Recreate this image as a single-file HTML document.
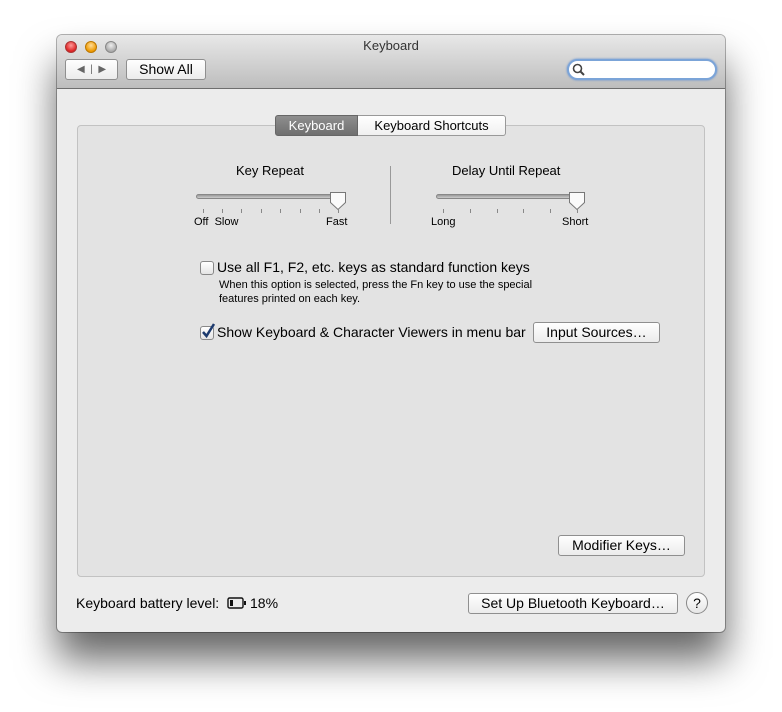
<!DOCTYPE html>
<html><head><meta charset="utf-8"><style>
*{box-sizing:border-box;margin:0;padding:0}
body{width:782px;height:712px;background:#fff;font-family:"Liberation Sans",sans-serif;font-size:14px;color:#000;position:relative;overflow:hidden}
.win{position:absolute;left:57px;top:35px;width:668px;height:597px;background:#ececec;border-radius:5px;box-shadow:0 28px 40px rgba(0,0,0,.6),0 0 0 1px rgba(0,0,0,.3);overflow:hidden}
.tb{position:absolute;left:0;top:0;width:668px;height:54px;background:linear-gradient(#e8e8e8,#bdbdbd);border-bottom:1px solid #6e6e6e}
.a{position:absolute}
.light{position:absolute;top:6px;width:12px;height:12px;border-radius:50%}
.btn{position:absolute;height:21px;border:1px solid #8f8f8f;border-radius:3px;background:linear-gradient(#fff,#ececec);text-align:center;line-height:19px;font-size:14px}
.t{position:absolute;white-space:nowrap}
.sm{font-size:11px}
.track{position:absolute;height:5px;border-radius:3px;background:linear-gradient(#999,#ccc);border:1px solid #888}
.tick{position:absolute;width:1px;height:4px;background:#888}
.cb{position:absolute;width:14px;height:14px;border:1px solid #888;border-radius:3px;background:linear-gradient(#fff,#e4e4e4)}
</style></head><body>
<div class="win">
 <div class="tb">
  <div class="light" style="left:8px;background:radial-gradient(circle at 50% 35%,#f99,#d22 70%);border:1px solid #a33"></div>
  <div class="light" style="left:28px;background:radial-gradient(circle at 50% 35%,#fd9,#e90 70%);border:1px solid #b70"></div>
  <div class="light" style="left:48px;background:radial-gradient(circle at 50% 35%,#eee,#aaa 70%);border:1px solid #888"></div>
  <div class="t" style="left:0;width:668px;text-align:center;top:3px;color:#333;font-size:13px">Keyboard</div>
  <div class="btn" style="left:8px;top:24px;width:53px;font-size:10px;color:#666">◀ &nbsp;|&nbsp; ▶</div>
  <div class="btn" style="left:69px;top:24px;width:80px">Show All</div>
  <div class="a" style="left:510px;top:24px;width:150px;height:21px;border-radius:11px;background:#fff;border:2px solid #7ba4d8;box-shadow:0 0 2px #5b8bd0"></div>
  <svg class="a" style="left:515px;top:28px" width="14" height="14"><circle cx="5.5" cy="5.5" r="4" fill="none" stroke="#444" stroke-width="1.6"/><path d="M8.5 8.5 12 12" stroke="#444" stroke-width="2"/></svg>
 </div>
 <div class="a" style="left:20px;top:90px;width:628px;height:452px;background:#e3e3e3;border:1px solid #c2c2c2;border-radius:4px"></div>
 <div class="a" style="left:218px;top:80px;width:83px;height:21px;background:linear-gradient(#8e8e8e,#6f6f6f);border:1px solid #666;border-radius:3px 0 0 3px;color:#fff;text-align:center;line-height:19px;font-size:13px">Keyboard</div>
 <div class="a" style="left:301px;top:80px;width:148px;height:21px;background:linear-gradient(#fff,#f0f0f0);border:1px solid #999;border-left:none;border-radius:0 3px 3px 0;text-align:center;line-height:19px;font-size:13px">Keyboard Shortcuts</div>

 <div class="t" style="left:179px;top:128px;font-size:13px">Key Repeat</div>
 <div class="track" style="left:139px;top:159px;width:146px"></div>
 <svg class="a" style="left:272px;top:156px" width="18" height="20"><path d="M1.5 1.5h15v10l-7.5 7-7.5-7z" fill="#fafafa" stroke="#777"/></svg>
 <div class="tick" style="left:146px;top:174px"></div><div class="tick" style="left:165px;top:174px"></div><div class="tick" style="left:184px;top:174px"></div><div class="tick" style="left:204px;top:174px"></div><div class="tick" style="left:223px;top:174px"></div><div class="tick" style="left:243px;top:174px"></div><div class="tick" style="left:262px;top:174px"></div><div class="tick" style="left:281px;top:174px"></div>
 <div class="t sm" style="left:137px;top:181px">Off&nbsp; Slow</div>
 <div class="t sm" style="left:269px;top:181px">Fast</div>
 <div class="a" style="left:333px;top:131px;width:1px;height:58px;background:#999"></div>
 <div class="t" style="left:395px;top:128px;font-size:13px">Delay Until Repeat</div>
 <div class="track" style="left:379px;top:159px;width:146px"></div>
 <svg class="a" style="left:511px;top:156px" width="18" height="20"><path d="M1.5 1.5h15v10l-7.5 7-7.5-7z" fill="#fafafa" stroke="#777"/></svg>
 <div class="tick" style="left:386px;top:174px"></div><div class="tick" style="left:413px;top:174px"></div><div class="tick" style="left:440px;top:174px"></div><div class="tick" style="left:466px;top:174px"></div><div class="tick" style="left:493px;top:174px"></div><div class="tick" style="left:520px;top:174px"></div>
 <div class="t sm" style="left:374px;top:181px">Long</div>
 <div class="t sm" style="left:505px;top:181px">Short</div>

 <div class="cb" style="left:143px;top:226px"></div>
 <div class="t" style="left:160px;top:224px">Use all F1, F2, etc. keys as standard function keys</div>
 <div class="t sm" style="left:162px;top:243px;line-height:14px">When this option is selected, press the Fn key to use the special<br>features printed on each key.</div>
 <div class="cb" style="left:143px;top:291px"></div>
 <svg class="a" style="left:143px;top:287px" width="16" height="18"><path d="M3 10l3.5 4L14 2" fill="none" stroke="#1c3a6e" stroke-width="2.5"/></svg>
 <div class="t" style="left:160px;top:289px">Show Keyboard &amp; Character Viewers in menu bar</div>
 <div class="btn" style="left:476px;top:287px;width:127px">Input Sources…</div>
 <div class="btn" style="left:501px;top:500px;width:127px">Modifier Keys…</div>

 <div class="t" style="left:19px;top:560px">Keyboard battery level:</div>
 <svg class="a" style="left:170px;top:562px" width="20" height="12"><rect x="1" y="1" width="15" height="10" rx="1.5" fill="none" stroke="#111" stroke-width="1.4"/><rect x="3" y="3" width="3" height="6" fill="#111"/><rect x="17" y="4" width="2" height="4" fill="#111"/></svg>
 <div class="t" style="left:193px;top:560px">18%</div>
 <div class="btn" style="left:411px;top:558px;width:210px">Set Up Bluetooth Keyboard…</div>
 <div class="a" style="left:629px;top:557px;width:22px;height:22px;border-radius:50%;border:1px solid #888;background:linear-gradient(#fff,#e6e6e6);text-align:center;line-height:20px;font-size:14px">?</div>
</div>
</body></html>
